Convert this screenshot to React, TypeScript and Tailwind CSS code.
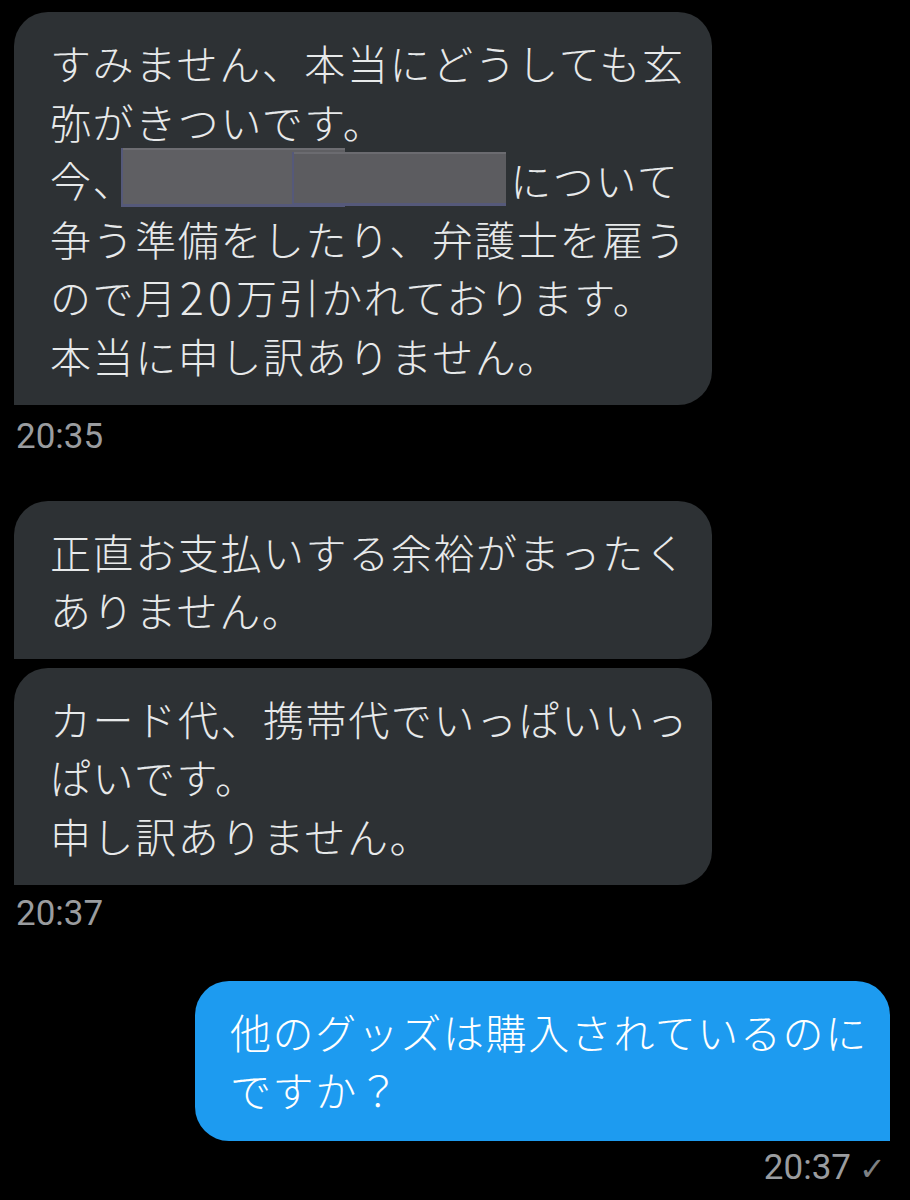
const jp = { fontFamily: '"Noto Sans CJK JP", "Noto Sans", sans-serif' };

const Line = ({ children }: { children: React.ReactNode }) => (
  <div className="h-[58.6px] leading-[58.6px] whitespace-nowrap flex items-center">{children}</div>
);

const Left = ({ lines, className = "" }: { lines: React.ReactNode[]; className?: string }) => (
  <div
    className={`w-[698px] ml-[14px] bg-[#2d3134] text-[#e7e9ea] rounded-[34px] rounded-bl-none pl-[36px] pt-[21px] pb-[20px] text-[41px] tracking-[1.6px] font-light ${className}`}
    style={jp}
  >
    {lines.map((l, i) => (
      <Line key={i}>{l}</Line>
    ))}
  </div>
);

const Time = ({ t, check, className = "" }: { t: string; check?: boolean; className?: string }) => (
  <div
    className={`flex items-center h-[40px] text-[35px] text-[#9a9c9f] ${className}`}
    style={{ fontFamily: 'Roboto, "Liberation Sans", sans-serif' }}
  >
    <span>{t}</span>
    {check && <span className="ml-[8px] text-[32px] text-[#7d8084]">✓</span>}
  </div>
);

export default function App() {
  return (
    <div className="w-[910px] h-[1200px] bg-black overflow-hidden pt-[12px]">
      <Left
        lines={[
          "すみません、本当にどうしても玄",
          "弥がきついです。",
          <>
            <span>今、</span>
            <span className="inline-block w-[224px] h-[59px] ml-[-14px] mt-[-4px] bg-[#5f5f63] border-b-[3px] border-l-[2px] border-[#55597a] shadow-[inset_0_2px_0_#6d6d72]" />
            <span className="inline-block w-[214px] h-[54px] ml-[-53px] bg-[#5c5c60] border-b-[3px] border-l-[2px] border-[#55597a] shadow-[inset_0_2px_0_#6b6b70]" />
            <span className="ml-[4px]">について</span>
          </>,
          "争う準備をしたり、弁護士を雇う",
          <>
            ので月<span className="text-[45px] tracking-[4px] ml-[2px]">20</span>万引かれております。
          </>,
          "本当に申し訳ありません。",
        ]}
      />
      <Time t="20:35" className="ml-[16px] mt-[13px]" />
      <Left className="mt-[43px]" lines={["正直お支払いする余裕がまったく", "ありません。"]} />
      <Left className="mt-[9px]" lines={["カード代、携帯代でいっぱいいっ", "ぱいです。", "申し訳ありません。"]} />
      <Time t="20:37" className="ml-[16px] mt-[10px]" />
      <div className="flex justify-end pr-[20px] mt-[46px]">
        <div
          className="w-[695px] bg-[#1d9bf0] text-white rounded-[34px] rounded-br-none pl-[35px] pt-[21px] pb-[22px] text-[41px] tracking-[1.6px] font-light"
          style={jp}
        >
          <Line>他のグッズは購入されているのに</Line>
          <Line>ですか？</Line>
        </div>
      </div>
      <div className="flex justify-end pr-[24px] mt-[8px]">
        <Time t="20:37" check />
      </div>
    </div>
  );
}
